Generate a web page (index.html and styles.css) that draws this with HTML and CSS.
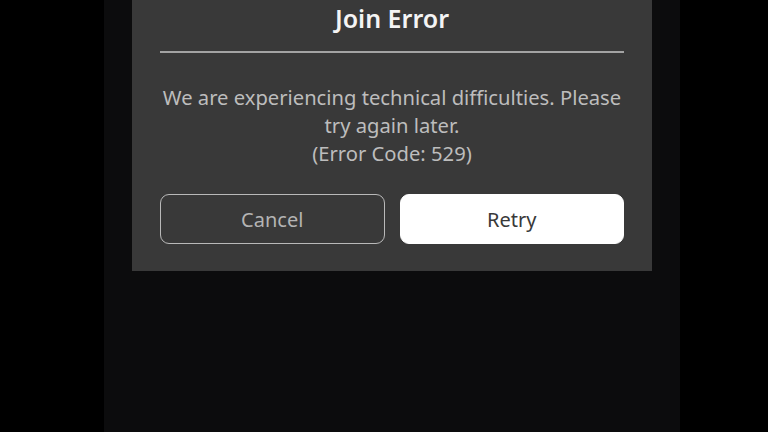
FILE: index.html
```html
<!DOCTYPE html>
<html lang="en">
<head>
  <meta charset="UTF-8" />
  <meta name="viewport" content="width=device-width, initial-scale=1.0" />
  <title>Join Error</title>
  <link rel="stylesheet" href="styles.css">
</head>
<body>
  <div class="screen">
    <div class="dialog">
      <h2 class="title">Join Error</h2>
      <div class="divider"></div>

      <p class="message">
        We are experiencing technical difficulties. Please<br>
        try again later.<br>
        (Error Code: 529)
      </p>

      <div class="actions">
        <button type="button" class="btn cancel-btn">Cancel</button>
        <button type="button" class="btn retry-btn">Retry</button>
      </div>
    </div>
  </div>
</body>
</html>
```

FILE: styles.css
```css
html, body {
  margin: 0;
  height: 100%;
}

body {
  background: #000000;
  font-family: 'Noto Sans', 'Open Sans', sans-serif;
  display: flex;
}

.screen {
  margin-left: 104px;
  width: 576px;
  height: 432px;
  background: #0c0c0d;
  padding: 0 28px;
  box-sizing: border-box;
}

.dialog {
  background: #393939;
  height: 271px;
  padding: 0 28px;
  box-sizing: border-box;
  display: flex;
  flex-direction: column;
}

.title {
  margin: 0;
  height: 38px;
  line-height: 36px;
  text-align: center;
  color: #f4f4f4;
  font-size: 25px;
  font-weight: 600;
}

.divider {
  margin-top: 13px;
  height: 2px;
  background: #a3a3a3;
}

.message {
  margin: 30px 0 0;
  text-align: center;
  color: #bdbdbd;
  font-size: 20.2px;
  line-height: 28px;
  white-space: nowrap;
}

.actions {
  margin-top: 27px;
  display: flex;
  gap: 15px;
}

.btn {
  flex: 1;
  height: 50px;
  border-radius: 9px;
  font-family: inherit;
  font-size: 20px;
  cursor: pointer;
}

.cancel-btn {
  background: transparent;
  border: 1.5px solid #b9b9b9;
  color: #b4b4b4;
}

.retry-btn {
  background: #ffffff;
  border: 1.5px solid #ffffff;
  color: #393939;
}
```
